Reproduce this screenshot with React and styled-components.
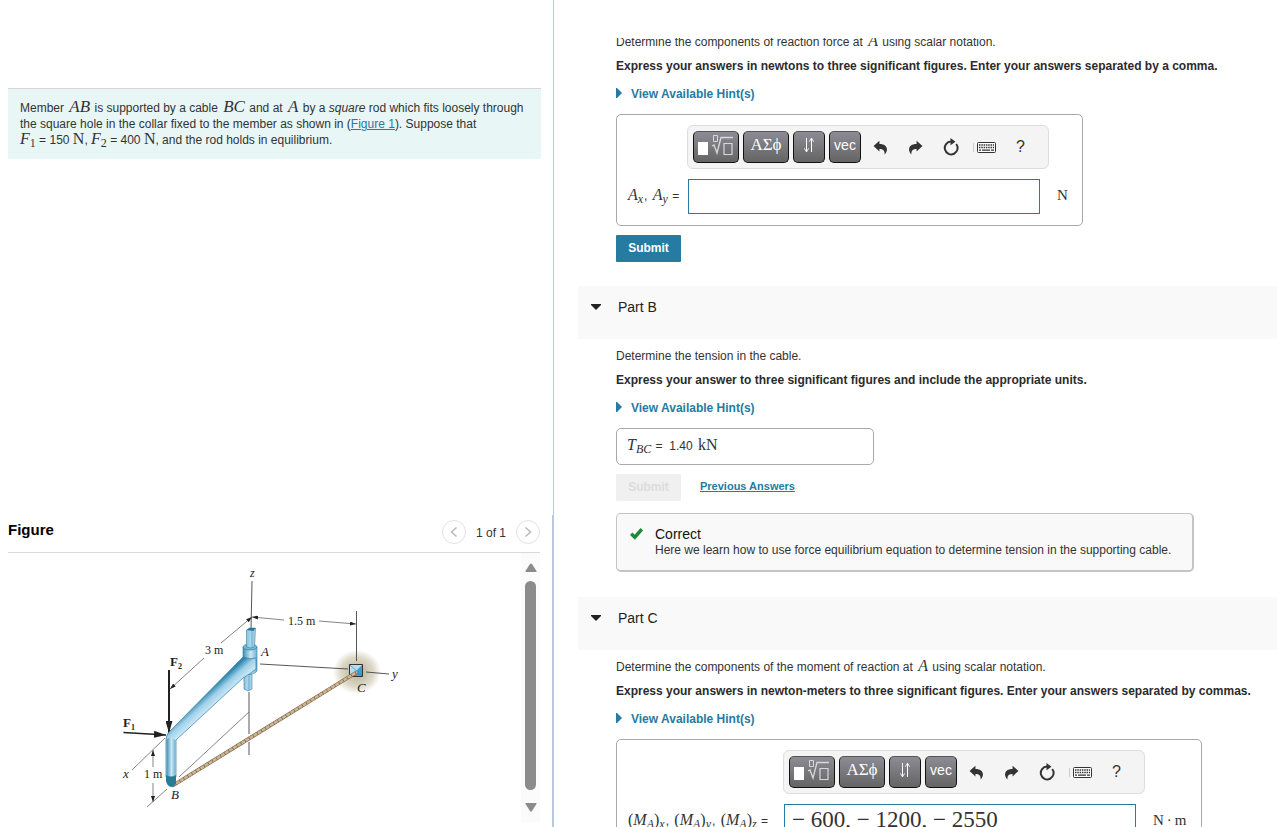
import { Fragment } from "react";
import styled, { createGlobalStyle, css } from "styled-components";

const sans = '"Liberation Sans", Arial, sans-serif';
const serif = '"Liberation Serif", "Times New Roman", serif';

const GlobalStyle = createGlobalStyle`
  * {
    box-sizing: border-box;
  }

  body {
    margin: 0;
    background: #fff;
    color: #333;
    font-family: ${sans};
    font-size: 12px;
    line-height: 16px;
  }

  button,
  input {
    font: inherit;
    color: inherit;
  }

  p,
  h2,
  h3 {
    margin: 0;
  }
`;

const Page = styled.div`
  display: grid;
  grid-template-columns: 554px minmax(0, 1fr);
  height: 100vh;
  overflow: hidden;
`;

/* ---------- left side ---------- */

const Sidebar = styled.aside`
  display: flex;
  flex-direction: column;
  min-height: 0;
`;

const IntroPane = styled.div`
  flex: 1;
  padding: 88px 12px 0 8px;
  border-right: 1px solid #b9c9df;
`;

const Intro = styled.div`
  padding: 11px 12px;
  border-top: 1px solid #d6d6d6;
  background: #e8f6f6;
`;

const TextLink = styled.a`
  color: #257ba1;
  ${({ $strong }) =>
    $strong &&
    css`
      padding-bottom: 4px;
      font-size: 11px;
      font-weight: bold;
    `}
`;

const Math = styled.span`
  margin: ${({ $upright }) => ($upright ? "0" : "0 1px 0 2px")};
  font-family: ${serif};
  font-size: ${({ $small, $upright }) => ($small || $upright ? 16 : 17)}px;
  line-height: 1px;

  sub {
    font-size: 12px;
    line-height: 1px;
    vertical-align: -3px;
  }
`;

const FigurePane = styled.section`
  padding: 0 12px 5px 0;
  border-right: 2px solid #b9c9df;
`;

const FigureHeader = styled.header`
  display: flex;
  align-items: center;
  justify-content: space-between;
  margin-left: 8px;
  padding-bottom: 4px;
  height: 38px;
  border-bottom: 1px solid #d9d9d9;
`;

const FigureTitle = styled.h2`
  color: #000;
  font-size: 15px;
  font-weight: bold;
  line-height: 20px;
  padding-bottom: 4px;
`;

const Pager = styled.nav`
  display: flex;
  align-items: center;
  gap: 10px;
`;

const PageCount = styled.span`
  padding-top: 2px;
`;

const PagerButton = styled.button`
  display: flex;
  align-items: center;
  justify-content: center;
  width: 24px;
  height: 24px;
  padding: 0;
  border: 1px solid #e2e2e2;
  border-radius: 50%;
  background: #fff;
`;

const FigureBody = styled.div`
  display: flex;
  justify-content: space-between;
`;

const Drawing = styled.svg`
  display: block;
  font-family: ${serif};
  font-size: 12px;
  fill: #222;
`;

const ScrollTrack = styled.div`
  display: flex;
  flex-direction: column;
  align-items: center;
  width: 19px;
  padding: 10px 0;
  background: #fbfbfb;
`;

const ScrollThumb = styled.div`
  flex: 1;
  width: 11px;
  margin: 9px 0 13px;
  border-radius: 6px;
  background: #8b8b8b;
`;

/* ---------- right side ---------- */

const Main = styled.main`
  min-width: 0;
  margin-top: 38px;
  padding-left: 24px;
  overflow: hidden;
`;

const PartBody = styled.section`
  padding: ${({ $first }) => ($first ? "0 0 24px 38px" : "9px 0 25px 38px")};
  margin-top: ${({ $first }) => ($first ? "-4px" : "0")};
`;

const PartHeader = styled.header`
  display: flex;
  align-items: flex-start;
  height: 53px;
  padding: 13px;
  background: #f9f9f9;
`;

const PartToggle = styled.button`
  display: flex;
  align-items: center;
  gap: 17px;
  padding: 0;
  border: 0;
  background: none;
  color: #222;
  font-size: 14px;
`;

const Instruction = styled.p`
  margin-top: 8px;
  font-weight: bold;
  color: #2b2b2b;
`;

const HintButton = styled.button`
  display: flex;
  align-items: center;
  gap: 9px;
  margin: 12px 0;
  padding: 0;
  border: 0;
  background: none;
  color: #257ba1;
  font-weight: bold;
`;

const AnswerBox = styled.div`
  display: grid;
  grid-template-columns: ${({ $labelWidth }) => $labelWidth}px 352px auto;
  align-items: center;
  row-gap: 10px;
  width: fit-content;
  padding: 10px 14px 11px 11px;
  border: 1px solid #a9a9a9;
  border-radius: 5px;
`;

const AnswerLabel = styled.label`
  margin-left: -2px;
  padding-bottom: 2px;
  white-space: nowrap;
`;

const Toolbar = styled.div`
  grid-column: 2 / 4;
  justify-self: start;
  display: flex;
  align-items: center;
  gap: 4px;
  width: 362px;
  height: 44px;
  margin-left: -1px;
  padding: 0 5px;
  border: 1px solid #ddd;
  border-radius: 6px;
  background: #f4f4f4;
`;

const DarkButton = styled.button`
  display: flex;
  align-items: center;
  justify-content: center;
  width: ${({ $wide }) => ($wide ? 46 : 32)}px;
  height: 32px;
  padding: 0 0 4px;
  border: 1px solid #111;
  border-top-color: #555;
  border-radius: 5px;
  background: linear-gradient(#8d8c95, #646464);
  color: #fff;
  font-family: ${({ $serif }) => ($serif ? serif : sans)};
  font-size: ${({ $serif }) => ($serif ? 17 : 14)}px;
`;

const IconButton = styled.button`
  display: flex;
  align-items: center;
  justify-content: center;
  width: 31px;
  height: 32px;
  padding: 0;
  border: 0;
  background: none;
  font-size: 16px;
`;

const AnswerInput = styled.input`
  width: 100%;
  height: 35px;
  padding: 0 7px 4px;
  border: 1px solid #257ba1;
  border-radius: 0;
  outline: 0;
  background: #fff;
  font-family: ${serif};
  font-size: 23px;
`;

const Unit = styled.span`
  padding-left: 17px;
  padding-bottom: 4px;
  font-family: ${serif};
  font-size: 15px;
`;

const Actions = styled.div`
  display: flex;
  align-items: center;
  gap: 19px;
  margin-top: 9px;
`;

const SubmitButton = styled.button`
  width: 65px;
  height: 27px;
  padding: 0 0 2px;
  border: 0;
  border-radius: 1px;
  background: #257ba1;
  color: #fff;
  font-weight: bold;

  &:disabled {
    background: #f0f0f0;
    color: #dcdcdc;
  }
`;

const Result = styled.div`
  width: 258px;
  height: 37px;
  padding: 9px 8px;
  border: 1px solid #a9a9a9;
  border-radius: 5px;
`;

const Feedback = styled.div`
  display: flex;
  gap: 12px;
  max-width: 578px;
  margin-top: 12px;
  padding: 12px 13px;
  border: 1px solid #c4c4c4;
  border-right-width: 2px;
  border-bottom-width: 2px;
  border-radius: 5px;
  background: #f9f9f9;

  h3 {
    color: #111;
    font-size: 14px;
    font-weight: normal;
  }
`;

const Chevron = ({ flip }) => (
  <svg width="8" height="12" viewBox="0 0 8 12" fill="none" stroke="#bbb" strokeWidth="1.6">
    <path d={flip ? "M1.5 1.5 6.5 6l-5 4.5" : "M6.5 1.5 1.5 6l5 4.5"} />
  </svg>
);

const ScrollArrow = ({ down }) => (
  <svg width="12" height="9" viewBox="0 0 12 9" fill="#8b8b8b">
    <path d={down ? "M1 0h10q1 0 .5 1L7 8Q6 9 5 8L.5 1Q0 0 1 0Z" : "M1 9h10q1 0 .5-1L7 1Q6 0 5 1L.5 8Q0 9 1 9Z"} />
  </svg>
);

const TemplateIcon = () => (
  <svg width="36" height="22" viewBox="0 0 36 22" fill="none" stroke="#d8d8dc">
    <path d="M0 8h10v13H0z" fill="#fff" stroke="none" />
    <path d="M15.5 1.500h4v6h-4z" />
    <path d="M14 12l2-1 3 8 4-15.500h12" strokeWidth="1.300" />
    <path d="M26 9.500h8v11h-8z" strokeWidth="1.200" />
  </svg>
);

const UndoIcon = ({ flip }) => (
  <svg width="15" height="15" viewBox="0 0 14 14" fill="#333">
    <g transform={flip ? "matrix(-1 0 0 1 14 0)" : undefined}>
      <path d="M.5 5.500 6 .8v3c4.500 0 7 2 7 5 0 1.800-1 3.400-2.200 4.700.3-3.400-1.300-5-4.800-5v2.300Z" />
    </g>
  </svg>
);

const ResetIcon = () => (
  <svg width="18" height="18" viewBox="0 0 18 18">
    <path d="M14.200 6A6.400 6.400 0 1 1 9 3.600" fill="none" stroke="#333" strokeWidth="2" />
    <path d="M8.500 0 13.500 3.800 8.500 7.200Z" fill="#333" />
  </svg>
);

const KeyboardIcon = () => (
  <svg width="25" height="16" viewBox="0 0 25 16">
    <path d="M.5 4v9" stroke="#ccc" />
    <rect x="4.500" y="3.500" width="18" height="10" rx="1" fill="#fff" stroke="#333" />
    <path d="M6 6h15M6 8.500h15" stroke="#333" strokeWidth="1.400" strokeDasharray="1.500 .8" />
    <path d="M6 11.200h2m1 0h8m1 0h3" stroke="#333" strokeWidth="1.200" />
  </svg>
);

const CheckIcon = () => (
  <svg width="13" height="15" viewBox="0 0 13 15" fill="none" stroke="#1e8a35" strokeWidth="3.400">
    <path d="M1.200 7.800 4.800 11.200 11.800 3.200" />
  </svg>
);

const Reaction = () => (
  <Drawing width="500" height="269" viewBox="0 553 500 269" role="img" aria-label="Member AB with cable BC">
    <defs>
      <linearGradient id="bar" gradientUnits="userSpaceOnUse" x1="205" y1="694" x2="214" y2="704">
        <stop offset="0" stopColor="#2f86b0" />
        <stop offset="0.500" stopColor="#9fd0e8" />
        <stop offset="1" stopColor="#c6e6f5" />
      </linearGradient>
      <linearGradient id="post">
        <stop offset="0" stopColor="#3b90b8" />
        <stop offset="0.550" stopColor="#cbe8f6" />
        <stop offset="1" stopColor="#6db3d2" />
      </linearGradient>
      <linearGradient id="rod">
        <stop offset="0" stopColor="#8cc4de" />
        <stop offset="0.450" stopColor="#a8d6ea" />
        <stop offset="0.600" stopColor="#7cb8d4" />
        <stop offset="1" stopColor="#c2e2f0" />
      </linearGradient>
      <radialGradient id="wall">
        <stop offset="0.300" stopColor="#c6c0a6" />
        <stop offset="0.700" stopColor="#dfdbcc" />
        <stop offset="1" stopColor="#fff" />
      </radialGradient>
      <marker id="tip" viewBox="0 0 6 4" markerWidth="6" markerHeight="4" refX="6" refY="2" orient="auto-start-reverse" markerUnits="userSpaceOnUse">
        <path d="M0 0 6 2 0 4Z" />
      </marker>
      <marker id="force" viewBox="0 0 12 7" markerWidth="12" markerHeight="7" refX="12" refY="3.500" orient="auto" markerUnits="userSpaceOnUse">
        <path d="M0 0 12 3.500 0 7Z" />
      </marker>
    </defs>
    <ellipse cx="357" cy="672" rx="24" ry="22" fill="url(#wall)" />
    <g stroke="#777" strokeWidth="0.900" fill="none">
      <path d="M252 581l-1 48M249 692v42M249 742v13M356.500 611v50M260 664l88 5M366 672l23 2" stroke="#444" />
      <path d="M165 738l-33 32M167 789l-20 18M249 712l-70 65" />
      <path d="M284 620l-32-3" markerEnd="url(#tip)" />
      <path d="M319 621l37 3" markerEnd="url(#tip)" />
      <path d="M221 643l31-26" markerEnd="url(#tip)" />
      <path d="M204 658l-34 31" markerEnd="url(#tip)" />
      <path d="M153 767v-17" markerEnd="url(#tip)" />
      <path d="M153 783v19" markerEnd="url(#tip)" />
    </g>
    <path d="M169 670v63" stroke="#222" strokeWidth="2" markerEnd="url(#force)" />
    <path d="M123.500 732.500 166 735" stroke="#222" strokeWidth="1.600" markerEnd="url(#force)" />

    <path d="M349.500 664.500h13v12h-13z" fill="#3f9fc8" stroke="#333" />
    <path d="M350 665h12l-6 6zM350 665v11l6-5z" fill="#b4def0" />
    <path d="M350 665l12 11" stroke="#357f9f" strokeWidth="0.600" />
    <path d="M172 786 357 672" stroke="#7d6b58" strokeWidth="3.800" />
    <path d="M172 786 357 672" stroke="#ceb48c" strokeWidth="2.600" strokeDasharray="4 0.800" />

    <path d="M244 674h8v15l-4 2-4-2z" fill="url(#rod)" stroke="#347d9e" strokeWidth="0.600" />
    <path d="M243 647v24c3 4 11 4 14 0v-24z" fill="url(#post)" stroke="#347d9e" strokeWidth="0.600" />
    <ellipse cx="250" cy="647" rx="7" ry="3" fill="#78b9d6" stroke="#347d9e" strokeWidth="0.700" />
    <path d="M246.500 630l3-2h6l-1 19q-4 2-8 0z" fill="url(#rod)" stroke="#347d9e" strokeWidth="0.600" />
    <path d="M246.500 630l3-2h6l-2 3z" fill="#267994" />
    <path d="M243 657 169 732q-3 3-3 8v37h10v-37L243 678q7-4 13-9v-11q-6 2-13-1z" fill="url(#bar)" stroke="#347d9e" strokeWidth="0.700" />
    <path d="M166.500 740q3-5 9 0v37h-9z" fill="url(#post)" />
    <path d="M166 775q5 3 10 0v8q-1 4-5 4-4-1-5-6z" fill="#287b95" />

    <text x="250" y="577" fontStyle="italic">z</text>
    <text x="288" y="625">1.5 m</text>
    <text x="205" y="654">3 m</text>
    <text x="144" y="778">1 m</text>
    <text x="261" y="656" fontSize="13" fontStyle="italic">A</text>
    <text x="392" y="678" fontSize="13" fontStyle="italic">y</text>
    <text x="357" y="692" fontSize="13" fontStyle="italic">C</text>
    <text x="123" y="778" fontSize="13" fontStyle="italic">x</text>
    <text x="171" y="799" fontSize="13" fontStyle="italic">B</text>
    <text x="170" y="666" fontSize="13" fontWeight="bold">F<tspan fontSize="8" dy="3">2</tspan></text>
    <text x="123" y="727" fontSize="13" fontWeight="bold">F<tspan fontSize="8" dy="3">1</tspan></text>
  </Drawing>
);

const Header = ({ children }) => (
  <PartHeader>
    <PartToggle type="button">
      <svg width="10" height="6" viewBox="0 0 10 6" fill="#222">
        <path d="M0 0h10v1L5 6 0 1Z" />
      </svg>
      {children}
    </PartToggle>
  </PartHeader>
);

const Hint = () => (
  <HintButton type="button">
    <svg width="6" height="12" viewBox="0 0 6 12" fill="#257ba1">
      <path d="M0 0h1l5 5-5 5H0Z" />
    </svg>
    View Available Hint(s)
  </HintButton>
);

const MathAnswer = ({ id, variables, labelWidth, value, unit }) => (
  <AnswerBox $labelWidth={labelWidth}>
    <Toolbar>
      <DarkButton type="button" $wide aria-label="Templates">
        <TemplateIcon />
      </DarkButton>
      <DarkButton type="button" $wide $serif>ΑΣϕ</DarkButton>
      <DarkButton type="button" $serif aria-label="Arrows">
        <svg width="14" height="18" viewBox="0 0 14 18" fill="none" stroke="#fff">
          <path d="M4.500 2v14M2 12.500q2 1 2.500 3.500.5-2.500 2.500-3.500M9.500 16V2M7 5.500q2-1 2.500-3.500.5 2.500 2.500 3.500" />
        </svg>
      </DarkButton>
      <DarkButton type="button">vec</DarkButton>
      <IconButton type="button" aria-label="Undo"><UndoIcon /></IconButton>
      <IconButton type="button" aria-label="Redo"><UndoIcon flip /></IconButton>
      <IconButton type="button" aria-label="Reset"><ResetIcon /></IconButton>
      <IconButton type="button" aria-label="Keyboard shortcuts"><KeyboardIcon /></IconButton>
      <IconButton type="button">?</IconButton>
    </Toolbar>
    <AnswerLabel htmlFor={id}>
      {variables.map(([name, axis], i) => (
        <Fragment key={axis}>
          {i > 0 && ", "}
          <Math $small>{name}<sub><i>{axis}</i></sub></Math>
        </Fragment>
      ))}
      {" ="}
    </AnswerLabel>
    <AnswerInput id={id} defaultValue={value} />
    <Unit>{unit}</Unit>
  </AnswerBox>
);

const moment = <>(<i>M</i><sub><i>A</i></sub>)</>;

const App = () => {
  return (
    <Page>
      <GlobalStyle />
      <Sidebar>
        <IntroPane>
          <Intro>
            Member <Math><i>AB</i></Math> is supported by a cable <Math><i>BC</i></Math> and at{" "}
            <Math><i>A</i></Math> by a <i>square</i> rod which fits loosely through the square hole in
            the collar fixed to the member as shown in (<TextLink href="#figure">Figure 1</TextLink>).
            Suppose that <br />
            <Math $upright><i>F</i><sub>1</sub></Math> = 150 <Math $upright>N</Math>,{" "}
            <Math $upright><i>F</i><sub>2</sub></Math> = 400 <Math $upright>N</Math>, and the rod holds
            in equilibrium.
          </Intro>
        </IntroPane>
        <FigurePane id="figure">
          <FigureHeader>
            <FigureTitle>Figure</FigureTitle>
            <Pager>
              <PagerButton type="button" aria-label="Previous figure"><Chevron /></PagerButton>
              <PageCount>1 of 1</PageCount>
              <PagerButton type="button" aria-label="Next figure"><Chevron flip /></PagerButton>
            </Pager>
          </FigureHeader>
          <FigureBody>
            <Reaction />
            <ScrollTrack>
              <ScrollArrow />
              <ScrollThumb />
              <ScrollArrow down />
            </ScrollTrack>
          </FigureBody>
        </FigurePane>
      </Sidebar>

      <Main>
        <PartBody $first>
          <p>
            Determine the components of reaction force at <Math $small><i>A</i></Math> using scalar
            notation.
          </p>
          <Instruction>
            Express your answers in newtons to three significant figures. Enter your answers
            separated by a comma.
          </Instruction>
          <Hint />
          <MathAnswer
            id="force-answer"
            labelWidth={60}
            variables={[[<i>A</i>, "x"], [<i>A</i>, "y"]]}
            value=""
            unit="N"
          />
          <Actions>
            <SubmitButton type="submit">Submit</SubmitButton>
          </Actions>
        </PartBody>

        <Header>Part B</Header>
        <PartBody>
          <p>Determine the tension in the cable.</p>
          <Instruction>
            Express your answer to three significant figures and include the appropriate units.
          </Instruction>
          <Hint />
          <Result>
            <Math $small><i>T</i><sub><i>BC</i></sub></Math> = &nbsp;1.40 <Math $small>kN</Math>
          </Result>
          <Actions>
            <SubmitButton type="submit" disabled>Submit</SubmitButton>
            <TextLink href="#previous" $strong>Previous Answers</TextLink>
          </Actions>
          <Feedback>
            <CheckIcon />
            <div>
              <h3>Correct</h3>
              <p>
                Here we learn how to use force equilibrium equation to determine tension in the
                supporting cable.
              </p>
            </div>
          </Feedback>
        </PartBody>

        <Header>Part C</Header>
        <PartBody>
          <p>
            Determine the components of the moment of reaction at <Math $small><i>A</i></Math> using
            scalar notation.
          </p>
          <Instruction>
            Express your answers in newton-meters to three significant figures. Enter your answers
            separated by commas.
          </Instruction>
          <Hint />
          <MathAnswer
            id="moment-answer"
            labelWidth={156}
            variables={[[moment, "x"], [moment, "y"], [moment, "z"]]}
            value="− 600, − 1200, − 2550"
            unit={"N\u2009·\u2009m"}
          />
        </PartBody>
      </Main>
    </Page>
  );
};

export default App;
